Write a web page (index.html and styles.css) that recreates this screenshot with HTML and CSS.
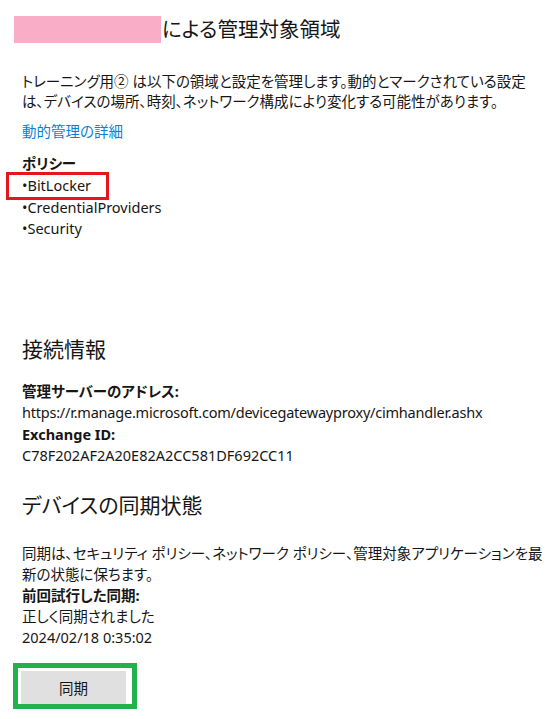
FILE: index.html
```html
<!DOCTYPE html>
<html lang="ja">
<head>
    <meta charset="UTF-8">
    <meta name="viewport" content="width=device-width, initial-scale=1.0">
    <title>管理対象領域</title>
    <link rel="stylesheet" href="styles.css">
</head>
<body>

    <div class="page">

        <!-- 管理対象領域 -->
        <section class="area">
            <h1 class="title"><span class="redacted"></span>による管理対象領域</h1>
            <p class="desc">トレーニング用② は以下の領域と設定を管理します。動的とマークされている設定<br>は、デバイスの場所、時刻、ネットワーク構成により変化する可能性があります。</p>
            <a class="more-link" href="#">動的管理の詳細</a>

            <div class="label">ポリシー</div>
            <ul class="policy-list">
                <li><span class="mark-red">•BitLocker</span></li>
                <li>•CredentialProviders</li>
                <li>•Security</li>
            </ul>
        </section>

        <!-- 接続情報 -->
        <section class="connection">
            <h2 class="heading">接続情報</h2>
            <div class="info">
                <div class="label">管理サーバーのアドレス:</div>
                <div class="url">https://r.manage.microsoft.com/devicegatewayproxy/cimhandler.ashx</div>
                <div class="label">Exchange ID:</div>
                <div>C78F202AF2A20E82A2CC581DF692CC11</div>
            </div>
        </section>

        <!-- 同期状態 -->
        <section class="sync">
            <h2 class="heading">デバイスの同期状態</h2>
            <div class="sync-text">
                <p>同期は、セキュリティ ポリシー、ネットワーク ポリシー、管理対象アプリケーションを最<br>新の状態に保ちます。</p>
                <div class="label">前回試行した同期:</div>
                <div>正しく同期されました</div>
                <div>2024/02/18 0:35:02</div>
            </div>
            <div class="mark-green">
                <button class="sync-btn">同期</button>
            </div>
        </section>

    </div>

</body>
</html>
```

FILE: styles.css
```css
body {
    margin: 0;
    padding: 0;
    background-color: #ffffff;
    color: #161616;
    font-family: "Noto Sans", "Noto Sans CJK JP", sans-serif;
    font-size: 14.5px;
    font-feature-settings: "palt";
}

.page {
    padding: 15px 0 0 22px;
}

/* 見出し */
.title {
    display: flex;
    align-items: center;
    margin: 0 0 0 -8px;
    height: 28px;
    font-size: 20.5px;
    font-weight: normal;
    line-height: 28px;
}

.redacted {
    display: inline-block;
    width: 147px;
    height: 27px;
    margin-right: 1px;
    background-color: #f9adc7;
}

.heading {
    margin: 0;
    font-size: 21px;
    font-weight: normal;
    line-height: 28px;
}

.desc {
    margin: 28px 0 0;
    line-height: 20px;
}

.more-link {
    display: block;
    margin-top: 10px;
    line-height: 21px;
    color: #0c7fd5;
    text-decoration: none;
}

.label {
    font-weight: bold;
}

.area .label {
    margin-top: 11px;
    line-height: 21px;
}

.policy-list {
    list-style: none;
    margin: 1px 0 0;
    padding: 0;
    line-height: 21.5px;
}

/* 赤枠 */
.mark-red {
    display: inline-block;
    padding: 0 15px 0 13px;
    margin-left: -13px;
    outline: 3px solid #e4171f;
}

/* 接続情報 */
.connection {
    margin-top: 95px;
}

.info {
    margin-top: 18px;
    line-height: 21.5px;
}

.url {
    letter-spacing: -0.22px;
}

/* 同期状態 */
.sync {
    margin-top: 24px;
}

.sync-text {
    margin-top: 24px;
    line-height: 21px;
}

.sync-text p {
    margin: 0;
}

.mark-green {
    display: inline-block;
    margin: 15px 0 0 -9px;
    padding: 3px 6px 0 3px;
    border: 5px solid #22b14c;
}

.sync-btn {
    display: block;
    width: 105px;
    height: 33px;
    border: none;
    background-color: #e0e0e0;
    color: #161616;
    font-family: "Noto Sans", "Noto Sans CJK JP", sans-serif;
    font-size: 14.5px;
}
```
